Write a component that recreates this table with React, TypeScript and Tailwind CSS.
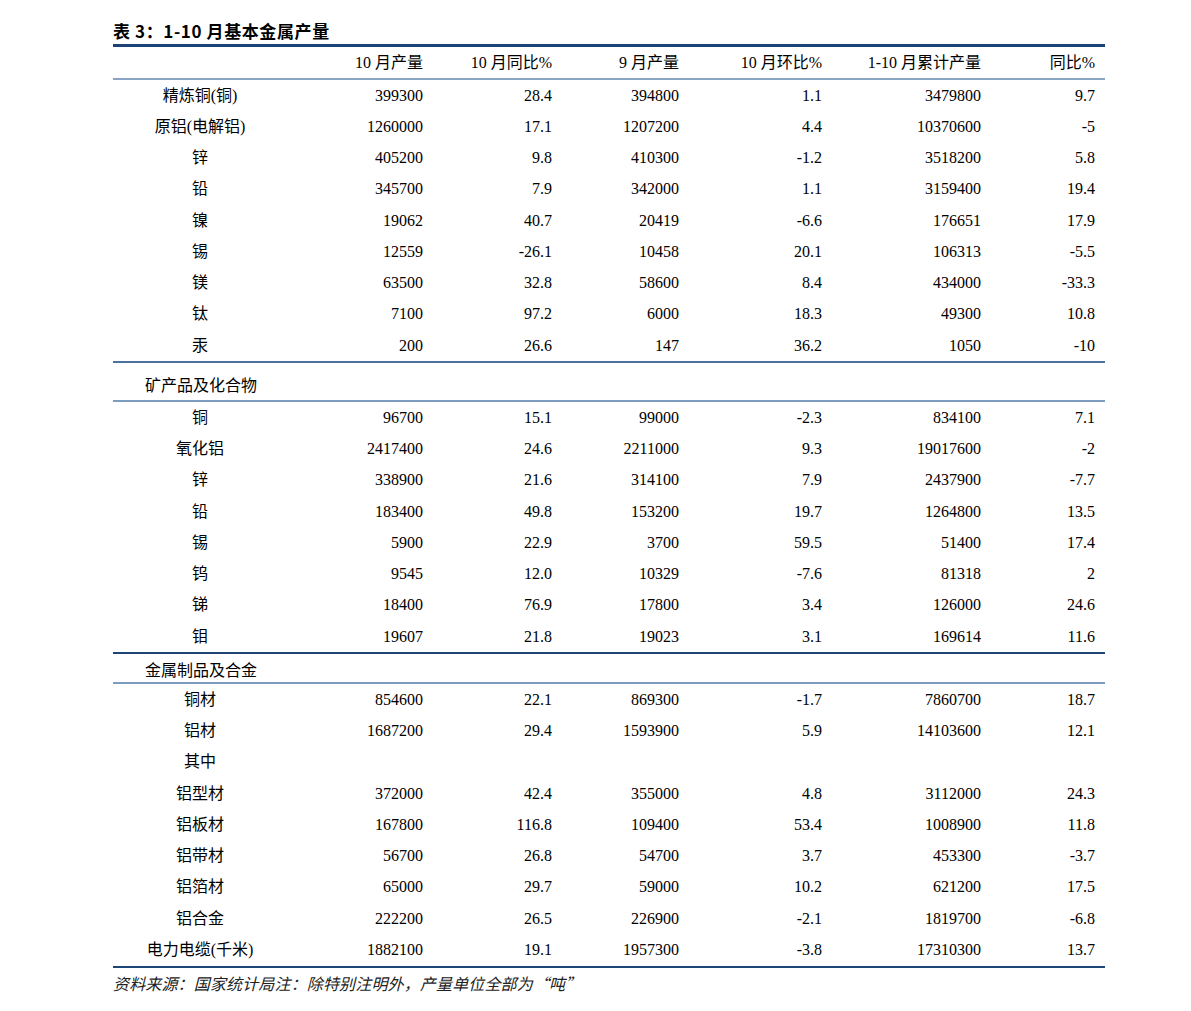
const SERIF = '"Liberation Serif", "Noto Sans CJK SC", serif';
const SANS = '"Noto Sans CJK SC", "Liberation Sans", sans-serif';

type Row = [string, ...string[]];

const HEADERS = ['10 月产量', '10 月同比%', '9 月产量', '10 月环比%', '1-10 月累计产量', '同比%'];

const BASIC: Row[] = [
  ['精炼铜(铜)', '399300', '28.4', '394800', '1.1', '3479800', '9.7'],
  ['原铝(电解铝)', '1260000', '17.1', '1207200', '4.4', '10370600', '-5'],
  ['锌', '405200', '9.8', '410300', '-1.2', '3518200', '5.8'],
  ['铅', '345700', '7.9', '342000', '1.1', '3159400', '19.4'],
  ['镍', '19062', '40.7', '20419', '-6.6', '176651', '17.9'],
  ['锡', '12559', '-26.1', '10458', '20.1', '106313', '-5.5'],
  ['镁', '63500', '32.8', '58600', '8.4', '434000', '-33.3'],
  ['钛', '7100', '97.2', '6000', '18.3', '49300', '10.8'],
  ['汞', '200', '26.6', '147', '36.2', '1050', '-10'],
];

const MINERALS: Row[] = [
  ['铜', '96700', '15.1', '99000', '-2.3', '834100', '7.1'],
  ['氧化铝', '2417400', '24.6', '2211000', '9.3', '19017600', '-2'],
  ['锌', '338900', '21.6', '314100', '7.9', '2437900', '-7.7'],
  ['铅', '183400', '49.8', '153200', '19.7', '1264800', '13.5'],
  ['锡', '5900', '22.9', '3700', '59.5', '51400', '17.4'],
  ['钨', '9545', '12.0', '10329', '-7.6', '81318', '2'],
  ['锑', '18400', '76.9', '17800', '3.4', '126000', '24.6'],
  ['钼', '19607', '21.8', '19023', '3.1', '169614', '11.6'],
];

const PRODUCTS: Row[] = [
  ['铜材', '854600', '22.1', '869300', '-1.7', '7860700', '18.7'],
  ['铝材', '1687200', '29.4', '1593900', '5.9', '14103600', '12.1'],
  ['其中'],
  ['铝型材', '372000', '42.4', '355000', '4.8', '3112000', '24.3'],
  ['铝板材', '167800', '116.8', '109400', '53.4', '1008900', '11.8'],
  ['铝带材', '56700', '26.8', '54700', '3.7', '453300', '-3.7'],
  ['铝箔材', '65000', '29.7', '59000', '10.2', '621200', '17.5'],
  ['铝合金', '222200', '26.5', '226900', '-2.1', '1819700', '-6.8'],
  ['电力电缆(千米)', '1882100', '19.1', '1957300', '-3.8', '17310300', '13.7'],
];

const GRID = 'grid grid-cols-[174px_136px_129px_127px_143px_159px_114px] pr-[10px]';

const DataRows = ({ rows }: { rows: Row[] }) => (
  <>
    {rows.map((row, i) => (
      <div key={i} className={`${GRID} h-[31.25px] items-center leading-[20px]`}>
        <div className="text-center">{row[0]}</div>
        {[1, 2, 3, 4, 5, 6].map((c) => (
          <div key={c} className="text-right">
            {row[c] ?? ''}
          </div>
        ))}
      </div>
    ))}
  </>
);

const App = () => {
  return (
    <div className="min-h-screen bg-white text-black">
      <div className="ml-[113px] w-[992px]">
        <div
          className="h-[44px] pt-[21px] text-[17px] font-bold leading-[20px] tracking-[0.6px]"
          style={{ fontFamily: SANS }}
        >
          表 3：1-10 月基本金属产量
        </div>

        <div className="text-[16px]" style={{ fontFamily: SERIF }}>
          <div className="h-[3px] bg-[#1b4375]" />
          <div className={`${GRID} h-[31px] items-center leading-[20px]`}>
            <div />
            {HEADERS.map((h) => (
              <div key={h} className="text-right">
                {h}
              </div>
            ))}
          </div>
          <div className="h-[2px] bg-[#8aa4c4]" />

          <DataRows rows={BASIC} />

          <div className="h-[2px] bg-[#4e72a0]" />
          <div className="flex h-[37px] items-center pl-[32px] pt-[5px] leading-[20px]" style={{ fontFamily: SANS }}>
            矿产品及化合物
          </div>
          <div className="h-[2px] bg-[#7e9bc0]" />

          <DataRows rows={MINERALS} />

          <div className="h-[2px] bg-[#1d4676]" />
          <div className="flex h-[28px] items-center pl-[32px] pt-[1px] leading-[20px]" style={{ fontFamily: SANS }}>
            金属制品及合金
          </div>
          <div className="h-[2px] bg-[#7e9bc0]" />

          <DataRows rows={PRODUCTS} />

          <div className="h-[2px] bg-[#1d4676]" />
        </div>

        <div
          className="pt-[4px] text-[16px] italic leading-[22px] tracking-[0.15px] text-[#222]"
          style={{ fontFamily: SANS }}
        >
          资料来源：国家统计局注：除特别注明外，产量单位全部为“吨”
        </div>
      </div>
    </div>
  );
};

export default App;
